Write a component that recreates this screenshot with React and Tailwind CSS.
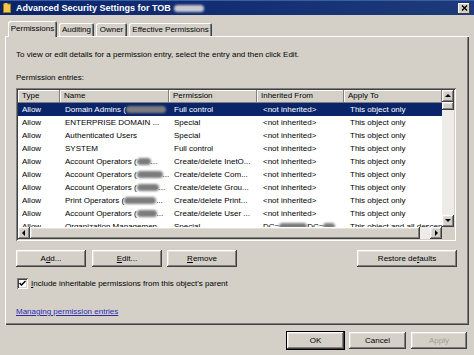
import React from 'react';

// classic 3D bevels
const raised =
  'shadow-[inset_-1px_-1px_0_#404040,inset_1px_1px_0_#ffffff,inset_-2px_-2px_0_#808080,inset_2px_2px_0_#e4e1db]';
const sunken =
  'shadow-[inset_1px_1px_0_#808080,inset_-1px_-1px_0_#ffffff,inset_2px_2px_0_#404040,inset_-2px_-2px_0_#d4d0c8]';
const headerCell =
  'shadow-[inset_-1px_-1px_0_#808080,inset_1px_1px_0_#ffffff]';

const Blob = ({ w, light }) => (
  <span
    className={`inline-block align-middle h-[7px] rounded-full blur-[0.8px] ${light ? 'bg-[#c9c9cf]' : 'bg-[#7c7c7c]'}`}
    style={{ width: w }}
  />
);

const rows = [
  { name: ['Domain Admins (', 40, ''], perm: 'Full control', from: '<not inherited>', to: 'This object only', sel: true },
  { name: ['ENTERPRISE DOMAIN ...'], perm: 'Special', from: '<not inherited>', to: 'This object only' },
  { name: ['Authenticated Users'], perm: 'Special', from: '<not inherited>', to: 'This object only' },
  { name: ['SYSTEM'], perm: 'Full control', from: '<not inherited>', to: 'This object only' },
  { name: ['Account Operators (', 14, '...'], perm: 'Create/delete InetO...', from: '<not inherited>', to: 'This object only' },
  { name: ['Account Operators (', 26, '...'], perm: 'Create/delete Com...', from: '<not inherited>', to: 'This object only' },
  { name: ['Account Operators (', 22, '...'], perm: 'Create/delete Grou...', from: '<not inherited>', to: 'This object only' },
  { name: ['Print Operators (', 32, '...'], perm: 'Create/delete Print...', from: '<not inherited>', to: 'This object only' },
  { name: ['Account Operators (', 20, '...'], perm: 'Create/delete User ...', from: '<not inherited>', to: 'This object only' },
  { name: ['Organization Managemen...'], perm: 'Special', from: 'dc', to: 'This object and all descen...' },
];

const Arrow = ({ dir }) => {
  const pts = {
    up: '1,5 4,2 7,5',
    down: '1,2 4,5 7,2',
    left: '5,1 2,4 5,7',
    right: '3,1 6,4 3,7',
  }[dir];
  return (
    <div className={`w-[12px] h-[12px] shrink-0 bg-[#d4d0c8] flex items-center justify-center ${raised}`}>
      <svg width="8" height="8" viewBox="0 0 8 8">
        <polygon points={pts} fill="#000" />
      </svg>
    </div>
  );
};

const Btn = ({ children, w, disabled, def }) => (
  <div
    className={`h-[17px] flex items-center justify-center bg-[#d4d0c8] ${raised} ${def ? 'outline outline-1 outline-black' : ''} ${disabled ? 'text-[#a09d98]' : 'text-black'}`}
    style={{ width: w }}
  >
    {children}
  </div>
);

const cols = ['w-[42px]', 'w-[109px]', 'w-[88px]', 'w-[87px]', 'flex-1'];

export default function App() {
  return (
    <div className="w-[474px] h-[355px] bg-[#d4d0c8] overflow-hidden flex flex-col text-[8px] leading-[13px] text-black font-['Liberation_Sans',Arial,sans-serif]">
      {/* title bar */}
      <div className="h-[15px] shrink-0 flex items-center bg-gradient-to-r from-[#0a246a] to-[#1d3a7a] border-t border-[#3b5ea8] pl-[3px] pr-[4px]">
        <svg width="8" height="10" viewBox="0 0 8 10" className="shrink-0">
          <rect x="0.5" y="1" width="7" height="8.5" fill="#f2c94c" stroke="#a27a10" strokeWidth="1" />
          <rect x="1.5" y="0" width="3" height="2" fill="#f2c94c" />
        </svg>
        <span className="ml-[5px] text-white font-bold text-[9px] leading-[13px]">Advanced Security Settings for TOB</span>
        <span className="ml-[3px]"><Blob w={30} light /></span>
        <div className="ml-auto w-[12px] h-[11px] bg-[#d4d0c8] flex items-center justify-center shadow-[inset_-1px_-1px_0_#404040,inset_1px_1px_0_#ffffff]">
          <svg width="7" height="6" viewBox="0 0 7 6">
            <path d="M1 0.5 L6 5.5 M6 0.5 L1 5.5" stroke="#000" strokeWidth="1.4" />
          </svg>
        </div>
      </div>

      {/* tabs */}
      <div className="mt-[6px] ml-[8px] h-[15px] flex items-end shrink-0 relative z-10">
        <div className="w-[49px] h-[16px] -mb-[1px] bg-[#d4d0c8] rounded-t-[2px] flex items-start justify-center pt-[1px] shadow-[inset_1px_1px_0_#ffffff,inset_-1px_0_0_#404040,inset_-2px_0_0_#808080]">
          Permissions
        </div>
        <div className="ml-[2px] w-[35px] h-[13px] rounded-t-[2px] flex items-center justify-center shadow-[inset_1px_1px_0_#ffffff,inset_-1px_0_0_#404040,inset_-2px_0_0_#808080]">
          Auditing
        </div>
        <div className="ml-[2px] w-[31px] h-[13px] rounded-t-[2px] flex items-center justify-center shadow-[inset_1px_1px_0_#ffffff,inset_-1px_0_0_#404040,inset_-2px_0_0_#808080]">
          Owner
        </div>
        <div className="ml-[2px] w-[83px] h-[13px] rounded-t-[2px] flex items-center justify-center shadow-[inset_1px_1px_0_#ffffff,inset_-1px_0_0_#404040,inset_-2px_0_0_#808080]">
          Effective Permissions
        </div>
      </div>

      {/* tab panel */}
      <div className="ml-[5px] w-[464px] h-[289px] shrink-0 flex flex-col px-[11px] pt-[12px] shadow-[inset_1px_1px_0_#ffffff,inset_-1px_-1px_0_#404040,inset_-2px_-2px_0_#808080]">
        <div>To view or edit details for a permission entry, select the entry and then click Edit.</div>
        <div className="mt-[10px]">Permission entries:</div>

        {/* list view */}
        <div className={`mt-[4px] w-[440px] h-[153px] bg-white p-[2px] flex flex-col ${sunken}`}>
          <div className="flex flex-1 min-h-0">
            <div className="flex-1 flex flex-col overflow-hidden">
              <div className="h-[13px] shrink-0 flex bg-[#d4d0c8]">
                {['Type', 'Name', 'Permission', 'Inherited From', 'Apply To'].map((h, i) => (
                  <div key={h} className={`${cols[i]} ${headerCell} h-full pl-[4px] leading-[12px] whitespace-nowrap overflow-hidden`}>
                    {h}
                  </div>
                ))}
              </div>
              {rows.map((r, i) => (
                <div
                  key={i}
                  className={`h-[13px] shrink-0 flex whitespace-nowrap ${r.sel ? 'bg-[#0a246a] text-white' : 'text-black'}`}
                >
                  <div className={`${cols[0]} pl-[4px] overflow-hidden`}>Allow</div>
                  <div className={`${cols[1]} pl-[5px] overflow-hidden`}>
                    {r.name[0]}
                    {r.name[1] ? <Blob w={r.name[1]} /> : null}
                    {r.name[2]}
                  </div>
                  <div className={`${cols[2]} pl-[5px] overflow-hidden`}>{r.perm}</div>
                  <div className={`${cols[3]} pl-[6px] overflow-hidden`}>
                    {r.from === 'dc' ? (
                      <>
                        DC=<Blob w={28} />DC=<Blob w={12} />
                      </>
                    ) : (
                      r.from
                    )}
                  </div>
                  <div className={`${cols[4]} pl-[6px] overflow-hidden`}>{r.to}</div>
                </div>
              ))}
            </div>
            {/* vertical scrollbar */}
            <div className="w-[12px] shrink-0 flex flex-col bg-[#eeece8]">
              <Arrow dir="up" />
              <div className={`w-[12px] h-[8px] bg-[#d4d0c8] ${raised}`} />
              <div className="flex-1" />
              <Arrow dir="down" />
            </div>
          </div>
          {/* horizontal scrollbar */}
          <div className="h-[12px] shrink-0 flex">
            <div className="flex-1 flex bg-[#eeece8]">
              <Arrow dir="left" />
              <div className={`w-[390px] h-full bg-[#d4d0c8] ${raised}`} />
              <div className="flex-1" />
              <Arrow dir="right" />
            </div>
            <div className="w-[12px] bg-[#d4d0c8]" />
          </div>
        </div>

        {/* buttons */}
        <div className="mt-[9px] flex items-center">
          <Btn w={70}>A<u>d</u>d...</Btn>
          <div className="ml-[6px]"><Btn w={70}><u>E</u>dit...</Btn></div>
          <div className="ml-[5px]"><Btn w={70}><u>R</u>emove</Btn></div>
          <div className="ml-auto mr-[1px]"><Btn w={100}>Restore de<u>f</u>aults</Btn></div>
        </div>

        {/* checkbox */}
        <div className="mt-[10px] flex items-center h-[13px]">
          <div className={`w-[11px] h-[11px] bg-white flex items-center justify-center ml-[1px] ${sunken}`}>
            <svg width="7" height="7" viewBox="0 0 7 7">
              <path d="M0.5 3 L2.5 5 L6.5 1" stroke="#000" strokeWidth="1.5" fill="none" />
            </svg>
          </div>
          <span className="ml-[3px]"><u>I</u>nclude inheritable permissions from this object's parent</span>
        </div>

        {/* link */}
        <div className="mt-[15px]">
          <span className="text-[#2b2bb0] underline">Managing permission entries</span>
        </div>
      </div>

      {/* dialog buttons */}
      <div className="mt-[7px] mr-[7px] flex justify-end gap-[5px]">
        <Btn w={57} def>OK</Btn>
        <Btn w={57}>Cancel</Btn>
        <Btn w={56} disabled>Apply</Btn>
      </div>
    </div>
  );
}
